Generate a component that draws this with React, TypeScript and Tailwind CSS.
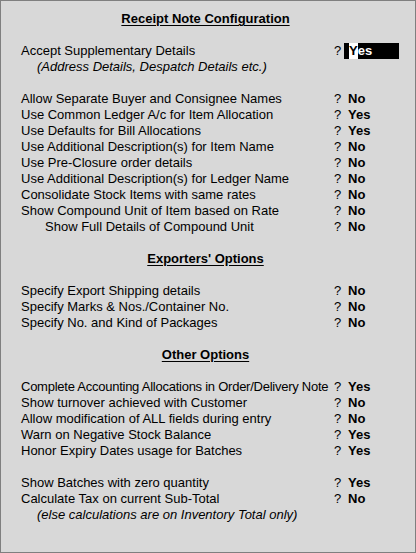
import React from 'react';

type Row =
  | { kind: 'opt'; label: string; value: 'Yes' | 'No'; indent?: boolean; active?: boolean; tight?: boolean }
  | { kind: 'note'; text: string }
  | { kind: 'title'; text: string }
  | { kind: 'gap' };

const rows: Row[] = [
  { kind: 'title', text: 'Receipt Note Configuration' },
  { kind: 'gap' },
  { kind: 'opt', label: 'Accept Supplementary Details', value: 'Yes', active: true },
  { kind: 'note', text: '(Address Details, Despatch Details etc.)' },
  { kind: 'gap' },
  { kind: 'opt', label: 'Allow Separate Buyer and Consignee Names', value: 'No' },
  { kind: 'opt', label: 'Use Common Ledger A/c for Item Allocation', value: 'Yes' },
  { kind: 'opt', label: 'Use Defaults for Bill Allocations', value: 'Yes' },
  { kind: 'opt', label: 'Use Additional Description(s) for Item Name', value: 'No' },
  { kind: 'opt', label: 'Use Pre-Closure order details', value: 'No' },
  { kind: 'opt', label: 'Use Additional Description(s) for Ledger Name', value: 'No' },
  { kind: 'opt', label: 'Consolidate Stock Items with same rates', value: 'No' },
  { kind: 'opt', label: 'Show Compound Unit of Item based on Rate', value: 'No' },
  { kind: 'opt', label: 'Show Full Details of Compound Unit', value: 'No', indent: true },
  { kind: 'gap' },
  { kind: 'title', text: "Exporters' Options" },
  { kind: 'gap' },
  { kind: 'opt', label: 'Specify Export Shipping details', value: 'No' },
  { kind: 'opt', label: 'Specify Marks & Nos./Container No.', value: 'No' },
  { kind: 'opt', label: 'Specify No. and Kind of Packages', value: 'No' },
  { kind: 'gap' },
  { kind: 'title', text: 'Other Options' },
  { kind: 'gap' },
  { kind: 'opt', label: 'Complete Accounting Allocations in Order/Delivery Note', value: 'Yes', tight: true },
  { kind: 'opt', label: 'Show turnover achieved with Customer', value: 'No' },
  { kind: 'opt', label: 'Allow modification of ALL fields during entry', value: 'No' },
  { kind: 'opt', label: 'Warn on Negative Stock Balance', value: 'Yes' },
  { kind: 'opt', label: 'Honor Expiry Dates usage for Batches', value: 'Yes' },
  { kind: 'gap' },
  { kind: 'opt', label: 'Show Batches with zero quantity', value: 'Yes' },
  { kind: 'opt', label: 'Calculate Tax on current Sub-Total', value: 'No' },
  { kind: 'note', text: '(else calculations are on Inventory Total only)' },
];

function OptionRow({ row }: { row: Extract<Row, { kind: 'opt' }> }) {
  return (
    <div className="flex h-4 items-center whitespace-nowrap">
      <span
        className={`w-[313px] shrink-0 ${row.indent ? 'pl-6' : ''} ${row.tight ? 'tracking-[-0.25px]' : ''}`}
      >
        {row.label}
      </span>
      <span className="w-[10px] shrink-0">?</span>
      {row.active ? (
        <span className="flex h-4 w-[55px] items-center bg-black pl-[5px] font-bold text-white">
          <span className="bg-white text-black">Y</span>es
        </span>
      ) : (
        <span className="pl-[4px] font-bold">{row.value}</span>
      )}
    </div>
  );
}

export default function App() {
  return (
    <div
      className="h-[553px] w-[416px] border border-[#7f7f7f] bg-[#d8d8d8] pt-[10px] text-[13px] leading-4 text-black"
      style={{ fontFamily: '"Liberation Sans", Arial, sans-serif' }}
    >
      {rows.map((row, i) => {
        if (row.kind === 'gap') return <div key={i} className="h-4" />;
        if (row.kind === 'title')
          return (
            <div key={i} className="flex h-4 w-[409px] items-center justify-center">
              <span className="font-bold underline underline-offset-[2px]">{row.text}</span>
            </div>
          );
        if (row.kind === 'note')
          return (
            <div key={i} className="h-4 pl-9 italic whitespace-nowrap">
              {row.text}
            </div>
          );
        return (
          <div key={i} className="pl-5">
            <OptionRow row={row} />
          </div>
        );
      })}
    </div>
  );
}
